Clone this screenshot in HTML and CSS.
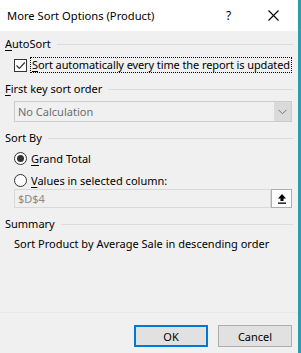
FILE: index.html
```html
<!DOCTYPE html>
<html lang="en">
<head>
    <meta charset="UTF-8">
    <title>More Sort Options (Product)</title>
    <link rel="stylesheet" href="styles.css">
</head>
<body>
    <div class="dialog">
        <div class="titlebar">
            <span class="title">More Sort Options (Product)</span>
            <span class="help">?</span>
            <span class="close">
                <svg width="11" height="11" viewBox="0 0 11 11"><path d="M0.5 0.5 L10.5 10.5 M10.5 0.5 L0.5 10.5" stroke="#000" stroke-width="1.1" fill="none"/></svg>
            </span>
        </div>

        <div class="content">
            <div class="group"><span><u>A</u>utoSort</span></div>
            <div class="check-row">
                <span class="checkbox">
                    <svg width="11" height="11" viewBox="0 0 11 11"><path d="M1.5 5.5 L4.3 8.3 L9.8 2.5" stroke="#333" stroke-width="1.2" fill="none"/></svg>
                </span>
                <span class="focus"><u>S</u>ort automatically every time the report is updated</span>
            </div>

            <div class="group gap"><span><u>F</u>irst key sort order</span></div>
            <div class="select">
                <span class="select-text">No Calculation</span>
                <span class="select-btn">
                    <svg width="9" height="6" viewBox="0 0 9 6"><path d="M0.5 0.8 L4.5 4.8 L8.5 0.8" stroke="#777" stroke-width="1" fill="none"/></svg>
                </span>
            </div>

            <div class="group gap"><span>Sort By</span></div>
            <div class="radio-row first">
                <span class="radio checked"></span>
                <span><u>G</u>rand Total</span>
            </div>
            <div class="radio-row">
                <span class="radio"></span>
                <span><u>V</u>alues in selected column:</span>
            </div>
            <div class="ref-row">
                <span class="ref-input">$D$4</span>
                <span class="ref-btn">
                    <svg width="10" height="11" viewBox="0 0 10 11"><path d="M5 1 L1 5.5 L3.5 5.5 L3.5 8 L6.5 8 L6.5 5.5 L9 5.5 Z" fill="#000"/><rect x="1" y="9.5" width="8" height="1.3" fill="#000"/></svg>
                </span>
            </div>

            <div class="group gap"><span>Summary</span></div>
            <div class="summary">Sort Product by Average Sale in descending order</div>
        </div>

        <div class="footer">
            <button class="btn default">OK</button>
            <button class="btn">Cancel</button>
        </div>
    </div>
</body>
</html>
```

FILE: styles.css
```css
body {
    margin: 0;
    font-family: "Noto Sans", "Open Sans", sans-serif;
    font-size: 11px;
    color: #000000;
    background-color: #ffffff;
}
u {
    text-decoration: underline;
    text-underline-offset: 2px;
}
.dialog {
    width: 298px;
    height: 353px;
    border-right: 3px solid #2a9fab;
    background-color: #f0f0f0;
    display: flex;
    flex-direction: column;
}
.titlebar {
    height: 31px;
    background-color: #ffffff;
    display: flex;
    align-items: center;
    padding-left: 7px;
}
.title {
    flex: 1;
    font-size: 11.2px;
}
.help {
    width: 12px;
    margin-right: 30px;
    font-size: 12px;
}
.close {
    width: 11px;
    height: 11px;
    margin-right: 19px;
    display: flex;
}
.content {
    flex: 1;
    padding: 6px 5px 0 5px;
}
.group {
    display: flex;
    align-items: center;
    height: 14px;
    line-height: 14px;
}
.group::after {
    content: "";
    flex: 1;
    margin-left: 6px;
    border-top: 1px solid #dcdcdc;
}
.group.gap {
    margin-top: 9px;
}
.check-row {
    display: flex;
    align-items: center;
    height: 16px;
    margin: 6px 0 0 9px;
    white-space: nowrap;
}
.checkbox {
    flex: none;
    width: 11px;
    height: 11px;
    border: 1px solid #333333;
    background-color: #ffffff;
    display: flex;
    margin-right: 3px;
}
.focus {
    border: 1px dotted #000000;
    padding: 0 1px;
    line-height: 14px;
    letter-spacing: -0.1px;
}
.select {
    display: flex;
    height: 21px;
    margin: 5px 0 0 9px;
    width: 278px;
    box-sizing: border-box;
    border: 1px solid #cccccc;
    background-color: #f0f0f0;
}
.select-text {
    flex: 1;
    color: #6d6d6d;
    line-height: 19px;
    padding-left: 3px;
}
.select-btn {
    width: 17px;
    background-color: #dadada;
    display: flex;
    align-items: center;
    justify-content: center;
}
.radio-row {
    display: flex;
    align-items: center;
    height: 16px;
    margin: 6px 0 0 9px;
}
.radio-row.first {
    margin-top: 5px;
}
.radio {
    width: 11px;
    height: 11px;
    border: 1px solid #333333;
    border-radius: 50%;
    background-color: #ffffff;
    margin-right: 4px;
    display: flex;
    align-items: center;
    justify-content: center;
}
.radio.checked::after {
    content: "";
    width: 7px;
    height: 7px;
    border-radius: 50%;
    background-color: #333333;
}
.ref-row {
    display: flex;
    margin: 1px 0 0 9px;
    width: 278px;
    height: 19px;
}
.ref-input {
    flex: 1;
    box-sizing: border-box;
    border: 1px solid #d9d9d9;
    color: #8a8a8a;
    line-height: 17px;
    padding-left: 3px;
}
.ref-btn {
    width: 21px;
    box-sizing: border-box;
    border: 1px solid #adadad;
    background-color: #fdfdfd;
    display: flex;
    align-items: center;
    justify-content: center;
}
.summary {
    margin: 5px 0 0 9px;
    line-height: 16px;
}
.footer {
    height: 41px;
    border-top: 1px solid #e8e8e8;
    display: flex;
    justify-content: flex-end;
    align-items: flex-start;
    padding: 12px 6px 0 0;
    box-sizing: border-box;
    gap: 10px;
}
.btn {
    width: 74px;
    height: 22px;
    font-family: "Noto Sans", "Open Sans", sans-serif;
    font-size: 11px;
    background-color: #e1e1e1;
    border: 1px solid #adadad;
    padding: 0;
}
.btn.default {
    border: 2px solid #0078d7;
}
```
